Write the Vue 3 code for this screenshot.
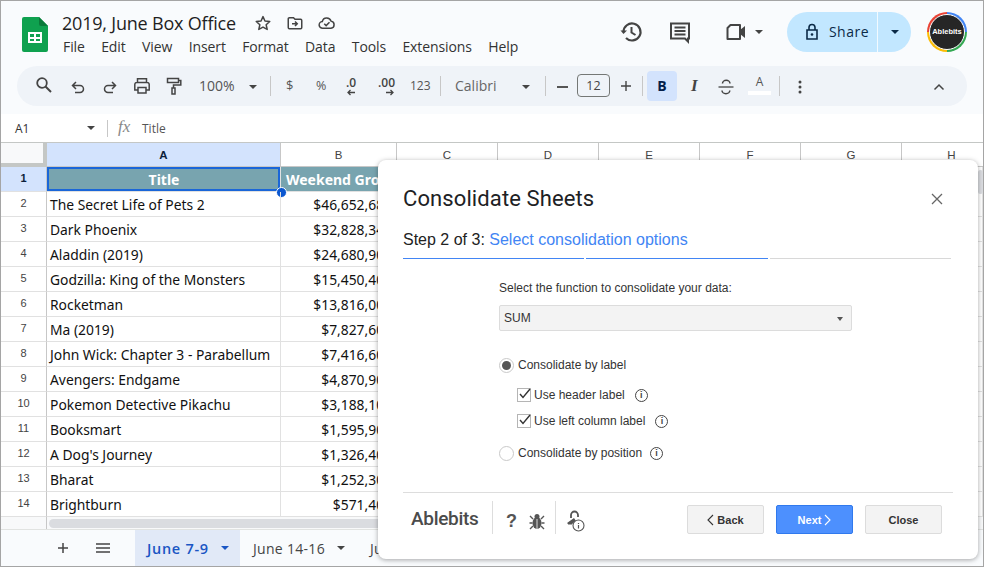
<script setup>
const menus = ['File', 'Edit', 'View', 'Insert', 'Format', 'Data', 'Tools', 'Extensions', 'Help']

const columns = [
  { name: 'C', width: 101 },
  { name: 'D', width: 101 },
  { name: 'E', width: 101 },
  { name: 'F', width: 101 },
  { name: 'G', width: 101 },
  { name: 'H', width: 100 },
]

const movies = [
  ['The Secret Life of Pets 2', '$46,652,680'],
  ['Dark Phoenix', '$32,828,348'],
  ['Aladdin (2019)', '$24,680,900'],
  ['Godzilla: King of the Monsters', '$15,450,400'],
  ['Rocketman', '$13,816,000'],
  ['Ma (2019)', '$7,827,600'],
  ['John Wick: Chapter 3 - Parabellum', '$7,416,600'],
  ['Avengers: Endgame', '$4,870,900'],
  ['Pokemon Detective Pikachu', '$3,188,100'],
  ['Booksmart', '$1,595,900'],
  ["A Dog's Journey", '$1,326,400'],
  ['Bharat', '$1,252,300'],
  ['Brightburn', '$571,400'],
]
</script>

<template>
  <div class="page">
    <header class="topbar">
      <svg class="logo" width="26" height="35" viewBox="0 0 26 35">
        <path d="M2 0H17L26 9V33a2 2 0 0 1-2 2H2a2 2 0 0 1-2-2V2a2 2 0 0 1 2-2z" fill="#0fa14f" />
        <path d="M17 0L26 9H19a2 2 0 0 1-2-2z" fill="#0a7a3a" />
        <path d="M6 15H20V26H6zM8 17V20H12V17zM14 17V20H18V17zM8 22V24H12V22zM14 22V24H18V22z" fill="#fff" fill-rule="evenodd" />
      </svg>
      <div class="titleBlock">
        <div class="docRow">
          <span class="docTitle">2019, June Box Office</span>
          <svg class="docIcon star" width="18" height="18" viewBox="0 0 24 24"><path d="M12 3.500l2.600 5.900 6.400.6-4.800 4.300 1.400 6.300L12 17.400l-5.600 3.200 1.400-6.300L3 10l6.400-.6z" fill="none" stroke="#444" stroke-width="2" stroke-linejoin="round" /></svg>
          <svg class="docIcon folder" width="18" height="18" viewBox="0 0 24 24"><path d="M3 6.500A1.500 1.500 0 0 1 4.500 5H10l2 2h7.500A1.500 1.500 0 0 1 21 8.500V18a1.500 1.500 0 0 1-1.500 1.500h-15A1.500 1.500 0 0 1 3 18z" fill="none" stroke="#444" stroke-width="2" /><path d="M8 13h6M12 10l3 3-3 3" fill="none" stroke="#444" stroke-width="2" /></svg>
          <svg class="docIcon cloud" width="19" height="18" viewBox="0 0 24 24"><path d="M7 19a4.500 4.500 0 0 1-.6-9A6 6 0 0 1 18 9.500 4.800 4.800 0 0 1 18 19z" fill="none" stroke="#444" stroke-width="2" /><path d="M9 13l2.500 2.500L16 11" fill="none" stroke="#444" stroke-width="2" /></svg>
        </div>
        <nav class="menus">
          <span v-for="menu in menus" :key="menu">{{ menu }}</span>
        </nav>
      </div>
      <div class="topActions">
        <svg width="24" height="24" viewBox="0 0 24 24" class="history"><path d="M4.500 12A8.500 8.500 0 1 1 7 18" fill="none" stroke="#444" stroke-width="2.200" /><path d="M1.500 10.500L4.500 14l3.500-3.500" fill="#444" /><path d="M12.500 7v5.500l4 2.500" fill="none" stroke="#444" stroke-width="2" /></svg>
        <svg width="24" height="24" viewBox="0 0 24 24" class="comment"><path d="M3 3.500h18v15h-1v3l-3-3H3z" fill="none" stroke="#444" stroke-width="2" /><path d="M6.500 7.500h11M6.500 11h11M6.500 14.500h11" stroke="#444" stroke-width="1.800" /></svg>
        <svg width="24" height="24" viewBox="0 0 24 24" class="meet"><path d="M6.500 5H16v14H3.500V8z" fill="none" stroke="#444" stroke-width="2" stroke-linejoin="round" /><path d="M16 10l5-4v12l-5-4z" fill="#444" /></svg>
        <span class="caret meetCaret"></span>
        <div class="share">
          <span class="shareMain">
            <svg width="16" height="18" viewBox="0 0 16 18"><path d="M3 7h10v9H3zM5 7V4.500a3 3 0 0 1 6 0V7" fill="none" stroke="#0b2a47" stroke-width="1.600" /><circle cx="8" cy="11.500" r="1.300" fill="#0b2a47" /></svg>
            Share
          </span>
          <span class="shareMore"><span class="caret dark"></span></span>
        </div>
        <div class="avatar"><span>Ablebits</span></div>
      </div>
    </header>

    <div class="toolbar">
      <svg class="tool search" width="18" height="18" viewBox="0 0 18 18"><circle cx="7" cy="7" r="4.800" fill="none" stroke="#444" stroke-width="1.800" /><path d="M10.500 10.500L16 16" stroke="#444" stroke-width="2" /></svg>
      <svg class="tool undo" width="18" height="18" viewBox="0 0 18 18"><path d="M7 4L3.500 7.500 7 11M3.500 7.500H11a3.500 3.500 0 0 1 0 7H6" fill="none" stroke="#444" stroke-width="1.500" /></svg>
      <svg class="tool redo" width="18" height="18" viewBox="0 0 18 18"><path d="M11 4l3.500 3.500L11 11M14.500 7.500H7a3.500 3.500 0 0 0 0 7h5" fill="none" stroke="#444" stroke-width="1.500" /></svg>
      <svg class="tool print" width="18" height="18" viewBox="0 0 18 18"><path d="M4.500 5V1.800h9V5M4.500 13H1.800V7.500A2 2 0 0 1 3.800 5.500h10.400a2 2 0 0 1 2 2V13h-2.700M5 10.500h8v5.500H5z" fill="none" stroke="#444" stroke-width="1.500" /></svg>
      <svg class="tool paint" width="18" height="18" viewBox="0 0 18 18"><path d="M2.500 1.500h11v4h-11zM13.500 3.500h2.300v4.500H8.500v3" fill="none" stroke="#444" stroke-width="1.500" /><path d="M7 11h3v6H7z" fill="none" stroke="#444" stroke-width="1.500" /></svg>
      <span class="zoomValue">100%</span>
      <span class="caret zoomCaret"></span>
      <i class="sep first"></i>
      <span class="sym dollar">$</span>
      <span class="sym percent">%</span>
      <span class="decimal dec1">.0<svg width="10" height="7" viewBox="0 0 10 7"><path d="M9 3.500H2M4.500 1L2 3.500 4.500 6" fill="none" stroke="#444" stroke-width="1.300" /></svg></span>
      <span class="decimal dec2">.00<svg width="10" height="7" viewBox="0 0 10 7"><path d="M1 3.500h7M5.500 1L8 3.500 5.500 6" fill="none" stroke="#444" stroke-width="1.300" /></svg></span>
      <span class="sym num">123</span>
      <i class="sep second"></i>
      <span class="fontName">Calibri</span>
      <span class="caret fontCaret"></span>
      <i class="sep third"></i>
      <span class="minus"></span>
      <span class="sizeBox">12</span>
      <svg class="plus" width="12" height="12" viewBox="0 0 12 12"><path d="M6 1v10M1 6h10" stroke="#444" stroke-width="1.400" /></svg>
      <i class="sep fourth"></i>
      <span class="bold">B</span>
      <span class="italic">I</span>
      <svg class="strike" width="18" height="18" viewBox="0 0 18 18"><path d="M1.500 9h15" stroke="#444" stroke-width="1.300" /><path d="M13 5.500A3.500 3 0 0 0 5.500 5.500M5 12.500A3.600 3 0 0 0 12.800 12.500" fill="none" stroke="#444" stroke-width="1.500" /></svg>
      <span class="colorA">A<b></b></span>
      <i class="sep fifth"></i>
      <svg class="dots" width="4" height="14" viewBox="0 0 4 14"><circle cx="2" cy="2" r="1.500" fill="#444" /><circle cx="2" cy="7" r="1.500" fill="#444" /><circle cx="2" cy="12" r="1.500" fill="#444" /></svg>
      <svg class="chevron" width="12" height="8" viewBox="0 0 12 8"><path d="M1.500 6.500L6 2l4.500 4.500" fill="none" stroke="#444" stroke-width="1.500" /></svg>
    </div>

    <div class="formula">
      <span class="cellName">A1</span>
      <span class="caret nameCaret"></span>
      <i class="formulaSep"></i>
      <span class="fx">fx</span>
      <span class="formulaText">Title</span>
    </div>

    <div class="sheet">
      <div class="row headRow">
        <div class="corner"></div>
        <div class="colHead colA active">A</div>
        <div class="colHead colB">B</div>
        <div v-for="col in columns" :key="col.name" class="colHead" :style="{ width: col.width + 'px' }">{{ col.name }}</div>
      </div>
      <div class="row dataRow">
        <div class="rowNum active">1</div>
        <div class="cell colA titleCell">Title</div>
        <div class="cell colB headCell">Weekend Gross</div>
        <div class="cell rest"></div>
        <span class="handle"></span>
      </div>
      <div v-for="(movie, i) in movies" :key="movie[0]" class="row dataRow">
        <div class="rowNum">{{ i + 2 }}</div>
        <div class="cell colA">{{ movie[0] }}</div>
        <div class="cell colB money">{{ movie[1] }}</div>
        <div class="cell rest"></div>
      </div>
      <div class="scrollRow">
        <div class="scrollGutter"></div>
        <div class="scrollThumb"></div>
      </div>
    </div>

    <footer class="tabs">
      <svg class="addSheet" width="12" height="12" viewBox="0 0 12 12"><path d="M6 1v10M1 6h10" stroke="#444" stroke-width="1.500" /></svg>
      <svg class="allSheets" width="16" height="12" viewBox="0 0 16 12"><path d="M1 2h14M1 6h14M1 10h14" stroke="#444" stroke-width="1.500" /></svg>
      <div class="tab current">June 7-9<span class="caret blue"></span></div>
      <div class="tab">June 14-16<span class="caret"></span></div>
      <div class="tab">June 21-23</div>
    </footer>

    <div class="sideThumb"></div>

    <section class="dialog">
      <div class="dialogHead">
        <h1>Consolidate Sheets</h1>
        <svg width="12" height="12" viewBox="0 0 12 12"><path d="M1 1l10 10M11 1L1 11" stroke="#666" stroke-width="1.300" /></svg>
      </div>
      <p class="step">Step 2 of 3: <span>Select consolidation options</span></p>
      <div class="progress"><i class="done"></i><i class="done"></i><i></i></div>

      <div class="options">
        <label class="selectLabel">Select the function to consolidate your data:</label>
        <div class="select">SUM<span class="selectCaret"></span></div>
        <div class="radioRow first">
          <span class="radio on"></span>Consolidate by label
        </div>
        <div class="checkRow one">
          <span class="check"><svg width="13" height="12" viewBox="0 0 13 12"><path d="M2 6l3 3.500L12 1" fill="none" stroke="#333" stroke-width="1.400" /></svg></span>
          Use header label
          <span class="info">i</span>
        </div>
        <div class="checkRow two">
          <span class="check"><svg width="13" height="12" viewBox="0 0 13 12"><path d="M2 6l3 3.500L12 1" fill="none" stroke="#333" stroke-width="1.400" /></svg></span>
          Use left column label
          <span class="info">i</span>
        </div>
        <div class="radioRow last">
          <span class="radio"></span>Consolidate by position
          <span class="info">i</span>
        </div>
      </div>

      <div class="dialogFoot">
        <div class="brand">Ablebits</div>
        <div class="helpIcons">
          <span class="question">?</span>
          <svg width="16" height="17" viewBox="0 0 16 17"><ellipse cx="8" cy="10" rx="4.500" ry="6" fill="#555" /><circle cx="8" cy="3.500" r="2.500" fill="#555" /><path d="M1 3l3 3M15 3l-3 3M0.500 10h3M15.500 10h-3M1 16l3-3M15 16l-3-3" stroke="#555" stroke-width="1.400" /><path d="M8 6v10" stroke="#fff" stroke-width="0.800" /></svg>
        </div>
        <div class="keyIcon">
          <svg width="20" height="22" viewBox="0 0 20 22"><path d="M6 8V5a3.500 3.500 0 0 1 7 0v2" fill="none" stroke="#555" stroke-width="1.800" /><path d="M9 8l-7 5 2 2 1-1 1 1 1-1 4-3z" fill="#555" /><circle cx="13.500" cy="15.500" r="5.500" fill="#fff" stroke="#555" stroke-width="1.100" /><path d="M13.500 13v1M13.500 15v3.500" stroke="#555" stroke-width="1.200" /></svg>
        </div>
        <div class="buttons">
          <button class="btn"><svg width="7" height="12" viewBox="0 0 7 12"><path d="M6 1L1 6l5 5" fill="none" stroke="#333" stroke-width="1.100" /></svg>Back</button>
          <button class="btn primary">Next<svg width="7" height="12" viewBox="0 0 7 12"><path d="M1 1l5 5-5 5" fill="none" stroke="#fff" stroke-width="1.100" /></svg></button>
          <button class="btn">Close</button>
        </div>
      </div>
    </section>
  </div>
</template>

<style>
html, body {
  margin: 0;
  background: #fff;
}
</style>

<style scoped>
.page {
  position: relative;
  width: 984px;
  height: 567px;
  box-sizing: border-box;
  border: 1px solid #a5a5a5;
  overflow: hidden;
  background: #f9fbfd;
  font-family: "Open Sans", "Liberation Sans", sans-serif;
  display: flex;
  flex-direction: column;
}

.caret {
  display: inline-block;
  width: 0;
  height: 0;
  border-left: 4px solid transparent;
  border-right: 4px solid transparent;
  border-top: 4px solid #444;
}
.caret.dark { border-top-color: #0b2a47; }
.caret.blue { border-top-color: #1a56c4; }

/* top bar */
.topbar {
  height: 65px;
  flex: none;
  display: flex;
  box-sizing: border-box;
  padding: 16px 0 0 21px;
}
.titleBlock { margin-left: 14px; margin-top: -7px; }
.docRow {
  display: flex;
  align-items: center;
  height: 26px;
}
.docTitle {
  font-family: "Open Sans", sans-serif;
  font-size: 18px;
  color: #1f1f1f;
  letter-spacing: -0.200px;
  white-space: nowrap;
}
.star { margin-left: 18px; }
.folder { margin-left: 14px; }
.cloud { margin-left: 13px; }
.menus {
  display: flex;
  gap: 16.400px;
  margin-top: 1px;
  padding-left: 1px;
  font-size: 14px;
  color: #333;
  font-family: "Open Sans", sans-serif;
  letter-spacing: -0.100px;
}
.topActions {
  position: absolute;
  left: 618px;
  top: 10px;
  display: flex;
  align-items: center;
  height: 41px;
}
.comment { margin-left: 25px; }
.meet { margin-left: 32px; }
.meetCaret { margin-left: 7px; }
.share {
  margin-left: 24px;
  width: 124px;
  height: 40px;
  border-radius: 20px;
  background: #c2e7ff;
  display: flex;
  color: #0b2a47;
  font-size: 14px;
  overflow: hidden;
}
.shareMain {
  width: 91px;
  box-sizing: border-box;
  display: flex;
  align-items: center;
  justify-content: flex-end;
  gap: 9px;
  padding-right: 8px;
  border-right: 1px solid #f2faff;
  letter-spacing: 0.500px;
}
.shareMore {
  flex: 1;
  display: flex;
  align-items: center;
  justify-content: center;
}
.avatar {
  margin-left: 16px;
  width: 40px;
  height: 40px;
  box-sizing: border-box;
  border-radius: 50%;
  padding: 2px;
  background: conic-gradient(#4285f4 0 25%, #34a853 25% 50%, #fbbc05 50% 75%, #ea4335 75% 100%);
}
.avatar span {
  display: flex;
  align-items: center;
  justify-content: center;
  width: 100%;
  height: 100%;
  border-radius: 50%;
  background: #262626;
  border: 1px solid #fff;
  box-sizing: border-box;
  color: #fff;
  font: bold 7.500px "Liberation Sans", sans-serif;
}

/* toolbar */
.toolbar {
  position: relative;
  flex: none;
  margin-left: 16px;
  width: 950px;
  height: 40px;
  border-radius: 20px;
  background: #eff3f8;
  color: #444;
  font-size: 13px;
}
.toolbar > * {
  position: absolute;
}
.search { left: 18px; top: 10px; }
.undo { left: 52px; top: 12px; }
.redo { left: 84px; top: 12px; }
.print { left: 116px; top: 11px; }
.paint { left: 148px; top: 11px; }
.zoomValue { left: 182px; top: 10px; font-size: 14px; color: #555; }
.zoomCaret { left: 232px; top: 19px; }
.sep { width: 1px; height: 20px; background: #c7c7c7; top: 10px; }
.first { left: 253px; }
.second { left: 423px; }
.third { left: 528px; }
.fourth { left: 625px; }
.fifth { left: 762px; }
.sym { color: #555; }
.dollar { left: 269px; top: 10px; font-size: 13px; }
.percent { left: 299px; top: 11px; font-size: 12.500px; }
.decimal {
  top: 10px;
  font-size: 12px;
  font-weight: 600;
  color: #444;
  display: flex;
  flex-direction: column;
  line-height: 14px;
}
.decimal svg { align-self: flex-end; margin-top: -1px; }
.dec1 { left: 329px; }
.dec2 { left: 361px; }
.num { left: 393px; top: 11px; font-size: 12px; }
.fontName { left: 438px; top: 10px; font-size: 14px; color: #666; }
.fontCaret { left: 505px; top: 19px; }
.minus { left: 540px; top: 20px; width: 11px; height: 1.500px; background: #555; }
.sizeBox {
  left: 560px;
  top: 8px;
  width: 33px;
  height: 23px;
  box-sizing: border-box;
  border: 1px solid #747775;
  border-radius: 4px;
  text-align: center;
  line-height: 21px;
  font-size: 12.500px;
}
.plus { left: 603px; top: 14px; }
.bold {
  left: 630px;
  top: 5px;
  width: 30px;
  height: 30px;
  border-radius: 4px;
  background: #d3e3fd;
  color: #041e49;
  font: bold 14px/30px "Open Sans", sans-serif;
  text-align: center;
}
.italic {
  left: 674px;
  top: 10px;
  font: italic bold 17px/20px "Liberation Serif", serif;
  color: #444;
}
.strike { left: 700px; top: 12px; }
.colorA {
  left: 731px;
  top: 8px;
  width: 23px;
  text-align: center;
  font-size: 12px;
  line-height: 16px;
  color: #555;
}
.colorA b {
  display: block;
  height: 4px;
  margin-top: 1px;
  background: #fff;
}
.dots { left: 781px; top: 14px; }
.chevron { left: 916px; top: 17px; }

/* formula bar */
.formula {
  flex: none;
  position: relative;
  height: 37px;
  background: #fff;
  color: #444;
  font-size: 12px;
  border-bottom: 1px solid #c4c7c5;
  box-sizing: border-box;
  box-shadow: inset 0 8px 0 #f9fbfd;
}
.formula > * { position: absolute; }
.cellName { left: 14px; top: 14px; color: #333; }
.nameCaret { left: 86px; top: 20px; }
.formulaSep { left: 106px; top: 14px; width: 1px; height: 17px; background: #c7c7c7; }
.fx {
  left: 117px;
  top: 11px;
  font: italic 17px "Liberation Serif", serif;
  color: #888;
}
.formulaText { left: 141px; top: 14px; color: #555; }

/* sheet */
.sheet {
  flex: 1;
  background: #fff;
  overflow: hidden;
  font-family: "Noto Sans", "Open Sans", sans-serif;
}
.row {
  display: flex;
  white-space: nowrap;
}
.headRow { height: 24px; }
.corner {
  width: 42px;
  height: 20px;
  flex: none;
  background: #f8f9fa;
  border-right: 4px solid #c4c7c5;
  border-bottom: 4px solid #c4c7c5;
}
.colHead {
  flex: none;
  box-sizing: border-box;
  border-right: 1px solid #c7c7c7;
  border-bottom: 1px solid #c7c7c7;
  font: 11.500px/24px "Liberation Sans", sans-serif;
  color: #444;
  text-align: center;
  background: #fff;
}
.colHead.active {
  background: #d3e3fd;
  color: #0b1f3a;
  font-weight: bold;
}
.colA { width: 234px; flex: none; }
.colB { width: 116px; flex: none; }
.dataRow {
  position: relative;
  height: 25px;
}
.rowNum {
  width: 46px;
  flex: none;
  box-sizing: border-box;
  border-right: 1px solid #c7c7c7;
  border-bottom: 1px solid #e1e1e1;
  font: 11px/23px "Liberation Sans", sans-serif;
  text-align: center;
  color: #444;
  background: #fff;
}
.rowNum.active {
  background: #d3e3fd;
  color: #0b1f3a;
  font-weight: bold;
}
.cell {
  box-sizing: border-box;
  border-right: 1px solid #e1e1e1;
  border-bottom: 1px solid #e1e1e1;
  padding: 0 3px;
  font-size: 13.850px;
  line-height: 26px;
  color: #111;
  overflow: hidden;
}
.money { text-align: right; padding-right: 4px; }
.rest { flex: 1; }
.titleCell, .headCell {
  background: #78a4af;
  color: #fff;
  font-weight: bold;
  font-size: 14px;
  line-height: 25px;
}
.headCell { padding-left: 5px; }
.titleCell {
  text-align: center;
  padding-left: 4px;
  box-shadow: inset 0 0 0 2px #1a66d8;
}
.handle {
  position: absolute;
  left: 275px;
  top: 20px;
  width: 9px;
  height: 9px;
  border: 1px solid #fff;
  border-radius: 50%;
  background: #0b57d0;
}
.scrollRow {
  display: flex;
  height: 13px;
  background: #f8f9fa;
}
.scrollGutter {
  width: 46px;
  box-sizing: border-box;
  border-right: 1px solid #c7c7c7;
}
.scrollThumb {
  width: 500px;
  height: 9px;
  margin: 2px 0 0 2px;
  background: #dadce0;
  border-radius: 5px;
}
.sideThumb {
  position: absolute;
  left: 977px;
  top: 169px;
  width: 5px;
  height: 24px;
  border-radius: 3px;
  background: #dadce0;
}

/* sheet tabs */
.tabs {
  flex: none;
  height: 37px;
  display: flex;
  align-items: center;
  background: #f9fbfd;
  border-top: 1px solid #e1e3e1;
  box-sizing: border-box;
  font-size: 14px;
  color: #444;
  font-family: "Open Sans", sans-serif;
  letter-spacing: 0.300px;
}
.addSheet { margin-left: 56px; }
.allSheets { margin-left: 26px; }
.tab {
  height: 100%;
  display: flex;
  align-items: center;
  gap: 12px;
  padding: 0 12px 0 13px;
  white-space: nowrap;
}
.tab.current {
  margin-left: 24px;
  background: #e1e9f7;
  color: #1a56c4;
  font-weight: 600;
  font-size: 14.500px;
  letter-spacing: 0.700px;
  padding-left: 12px;
  width: 105px;
  box-sizing: border-box;
}

/* dialog */
.dialog {
  position: absolute;
  left: 377px;
  top: 159px;
  width: 600px;
  height: 399px;
  box-sizing: border-box;
  background: #fff;
  border-radius: 8px;
  box-shadow: 0 1px 5px rgba(0, 0, 0, 0.35);
  padding: 0 25px;
  font-family: "Liberation Sans", sans-serif;
  display: flex;
  flex-direction: column;
}
.dialogHead {
  display: flex;
  align-items: center;
  justify-content: space-between;
  padding: 25px 10px 0 0;
  height: 52px;
  box-sizing: border-box;
}
.dialogHead h1 {
  margin: 0;
  font: 400 22px "Roboto", sans-serif;
  color: #202124;
  letter-spacing: 0.100px;
}
.step {
  margin: 20px 0 0;
  font-size: 16px;
  line-height: 16px;
  color: #222;
}
.step span { color: #4285f4; }
.progress {
  display: flex;
  gap: 2px;
  margin-top: 10px;
  width: 548px;
}
.progress i {
  flex: 1;
  height: 1px;
  background: #d8d8d8;
}
.progress i.done { background: #4285f4; }

.options {
  position: relative;
  margin-left: 96px;
  padding-top: 22px;
  font-size: 12px;
  color: #333;
}
.selectLabel { display: block; line-height: 14px; }
.select {
  position: relative;
  margin-top: 10px;
  width: 353px;
  height: 26px;
  box-sizing: border-box;
  border: 1px solid #dcdcdc;
  border-radius: 2px;
  background: #f3f3f3;
  padding-left: 4px;
  line-height: 24px;
}
.selectCaret {
  position: absolute;
  right: 8px;
  top: 11px;
  border-left: 3px solid transparent;
  border-right: 3px solid transparent;
  border-top: 4px solid #555;
}
.radioRow, .checkRow {
  display: flex;
  align-items: center;
  height: 16px;
}
.radioRow.first { margin-top: 26px; }
.checkRow { padding-left: 18px; }
.checkRow.one { margin-top: 14px; }
.checkRow.two { margin-top: 10px; }
.radioRow.last { margin-top: 16px; }
.radio {
  width: 13px;
  height: 13px;
  border: 1px solid #c9c9c9;
  border-radius: 50%;
  margin-right: 4px;
  box-sizing: content-box;
  position: relative;
  background: #fff;
}
.radio.on::after {
  content: "";
  position: absolute;
  left: 2px;
  top: 2px;
  width: 9px;
  height: 9px;
  border-radius: 50%;
  background: #555;
}
.check {
  position: relative;
  width: 12px;
  height: 12px;
  border: 1px solid #b5b5b5;
  margin-right: 3px;
}
.check svg {
  position: absolute;
  left: 0;
  top: -1px;
}
.info {
  margin-left: 10px;
  width: 11px;
  height: 11px;
  border: 1.200px solid #444;
  border-radius: 50%;
  font: bold 9px/11px "Liberation Sans", sans-serif;
  text-align: center;
  color: #444;
}
.radioRow .info { margin-left: 8px; }

.dialogFoot {
  position: absolute;
  left: 25px;
  right: 25px;
  bottom: 0;
  height: 66px;
  border-top: 1px solid #ddd;
  display: flex;
  align-items: flex-start;
}
.brand {
  position: relative;
  margin: 14px 0 0 8px;
  width: 81px;
  font: 500 19px "Roboto", sans-serif;
  color: #4b4b4b;
  letter-spacing: -0.300px;
}
.helpIcons, .keyIcon {
  margin-top: 8px;
  height: 33px;
  box-sizing: border-box;
  padding-top: 7px;
  display: flex;
  align-items: center;
  border-left: 1px solid #ddd;
}
.helpIcons {
  padding-left: 13px;
  width: 63px;
  gap: 12px;
}
.question {
  font: bold 18px "Liberation Sans", sans-serif;
  color: #555;
}
.keyIcon { padding-left: 9px; }
.buttons {
  margin-left: auto;
  margin-right: 11px;
  margin-top: 12px;
  display: flex;
  gap: 12px;
}
.btn {
  display: flex;
  align-items: center;
  justify-content: center;
  gap: 3px;
  width: 77px;
  height: 29px;
  padding: 0;
  border: 1px solid #dcdcdc;
  border-radius: 2px;
  background: #f3f3f3;
  font: bold 11px "Liberation Sans", sans-serif;
  color: #333;
}
.btn.primary {
  background: #4d90fe;
  border-color: #3079ed;
  color: #fff;
}
</style>
